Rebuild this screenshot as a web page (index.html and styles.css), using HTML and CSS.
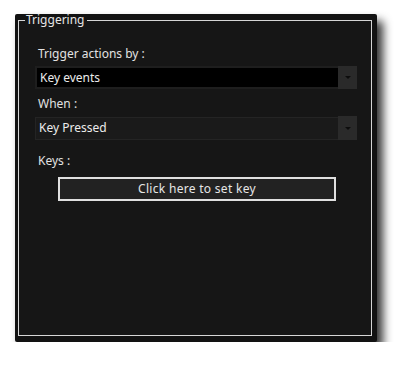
FILE: index.html
```html
<!DOCTYPE html>
<html>
<head>
<meta charset="utf-8">
<link rel="stylesheet" href="styles.css">
</head>
<body>
<div class="window">
  <fieldset class="group">
    <legend class="group-title">Triggering</legend>
    <div class="field-label first">Trigger actions by :</div>
    <div class="combo combo-active">
      <div class="combo-value">Key events</div>
      <div class="combo-btn"><span class="arrow"></span></div>
    </div>
    <div class="field-label">When :</div>
    <div class="combo">
      <div class="combo-value">Key Pressed</div>
      <div class="combo-btn"><span class="arrow"></span></div>
    </div>
    <div class="field-label keys">Keys :</div>
    <div class="key-btn">Click here to set key</div>
  </fieldset>
</div>
</body>
</html>
```

FILE: styles.css
```css
html, body {
  margin: 0;
  padding: 0;
  background: #ffffff;
}
body {
  font-family: "Noto Sans", "DejaVu Sans", sans-serif;
  font-size: 12px;
  color: #e2e2e2;
}
.window {
  margin: 14px 0 0 15px;
  width: 362px;
  height: 328px;
  box-sizing: border-box;
  background: #121212;
  border-radius: 2px;
  box-shadow: 6px 7px 10px rgba(0, 0, 0, 0.8);
  padding: 0 5px 0 3px;
}
.group {
  margin: 0;
  padding: 0 14px 0 16px;
  height: 322px;
  box-sizing: border-box;
  border: 1px solid #d6d6d6;
  background: #161616;
  min-width: 0;
}
.group-title {
  margin-left: -10px;
  padding: 0 2px 0 1px;
  line-height: 12px;
  height: 12px;
  color: #e6e6e6;
}
.field-label {
  height: 16px;
  line-height: 16px;
  padding-left: 3px;
  margin-top: 7px;
}
.field-label.first {
  margin-top: 20px;
}
.field-label.keys {
  margin-top: 13px;
}
.combo {
  display: flex;
  height: 23px;
  margin-top: 5px;
  box-sizing: border-box;
  border: 1px solid #242424;
  border-right: none;
  background: #1a1a1a;
}
.combo-active {
  margin-top: 4px;
  border-width: 2px;
  border-color: #1e1e1e;
  background: #000000;
}
.combo-value {
  flex: 1;
  line-height: 19px;
  padding-left: 3px;
  color: #ececec;
}
.combo-btn {
  width: 19px;
  margin: -2px 0 -1px;
  background: #2a2a2a;
  display: flex;
  align-items: center;
  justify-content: center;
}
.combo-active .combo-btn {
  margin: -2px 0 -2px;
}
.arrow {
  width: 0;
  height: 0;
  border-left: 3px solid transparent;
  border-right: 3px solid transparent;
  border-top: 3px solid #0c0c0c;
}
.key-btn {
  margin: 8px 21px 0 23px;
  height: 24px;
  box-sizing: border-box;
  border: 2px solid #e0e0e0;
  background: #222222;
  text-align: center;
  line-height: 20px;
  letter-spacing: 0.3px;
  color: #e6e6e6;
}
```
